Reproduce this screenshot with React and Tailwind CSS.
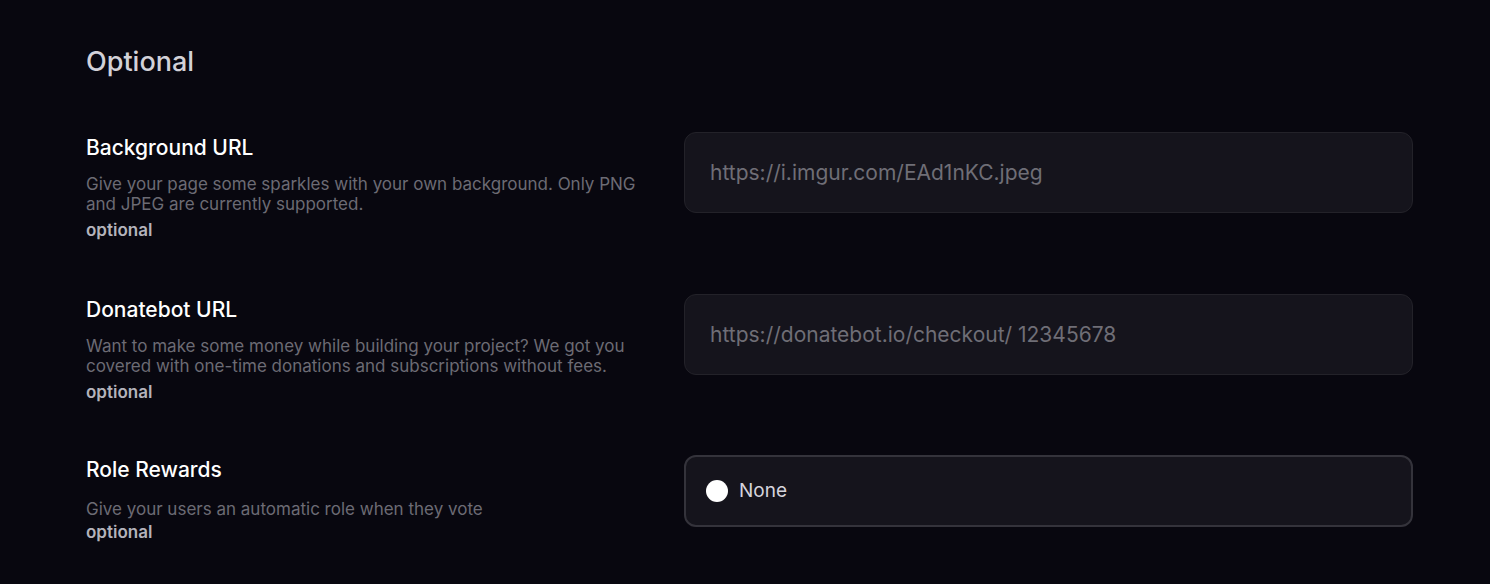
import React from 'react';

const rows = [
  {
    label: 'Background URL',
    desc: 'Give your page some sparkles with your own background. Only PNG and JPEG are currently supported.',
    value: 'https://i.imgur.com/EAd1nKC.jpeg',
  },
  {
    label: 'Donatebot URL',
    desc: 'Want to make some money while building your project? We got you covered with one-time donations and subscriptions without fees.',
    value: 'https://donatebot.io/checkout/ 12345678',
  },
];

const Info = ({ label, desc, tight }) => (
  <div className="w-[556px] shrink-0">
    <h2 className="text-[21px] leading-[28px] font-medium text-white">{label}</h2>
    <p className={tight ? 'mt-[15px] text-[17px] leading-[20px] text-[#6c6b74]' : 'mt-[12px] text-[17px] leading-[20px] text-[#6c6b74]'}>{desc}</p>
    <span className={tight ? 'block mt-[2px] text-[17px] leading-[22px] font-semibold text-[#b4b3bb]' : 'block mt-[5px] text-[17px] leading-[22px] font-semibold text-[#b4b3bb]'}>optional</span>
  </div>
);

export default function App() {
  return (
    <div className="min-h-[584px] bg-[#08070f] pl-[86px] pr-[77px] pt-[44px] font-['Inter',sans-serif]">
      <h1 className="text-[27px] leading-[36px] font-medium text-[#d2d1d8]">Optional</h1>

      <div className="mt-[54px] flex flex-col gap-[55px]">
        {rows.map((r) => (
          <div key={r.label} className="flex gap-[42px]">
            <Info label={r.label} desc={r.desc} />
            <div className="flex-1 -mt-[2px] h-[81px] rounded-[12px] border border-[#232229] bg-[#15141c] flex items-center px-[25px]">
              <span className="text-[21px] text-[#6f6e76]">{r.value}</span>
            </div>
          </div>
        ))}

        <div className="flex gap-[42px] -mt-[2px]">
          <Info label="Role Rewards" desc="Give your users an automatic role when they vote" tight />
          <div className="flex-1 -mt-[1px] h-[72px] rounded-[12px] border-2 border-[#34333b] bg-[#15141c] flex items-center px-[20px] gap-[11px]">
            <span className="w-[22px] h-[22px] rounded-full bg-white" />
            <span className="text-[19px] text-[#d6d5dc]">None</span>
          </div>
        </div>
      </div>
    </div>
  );
}
